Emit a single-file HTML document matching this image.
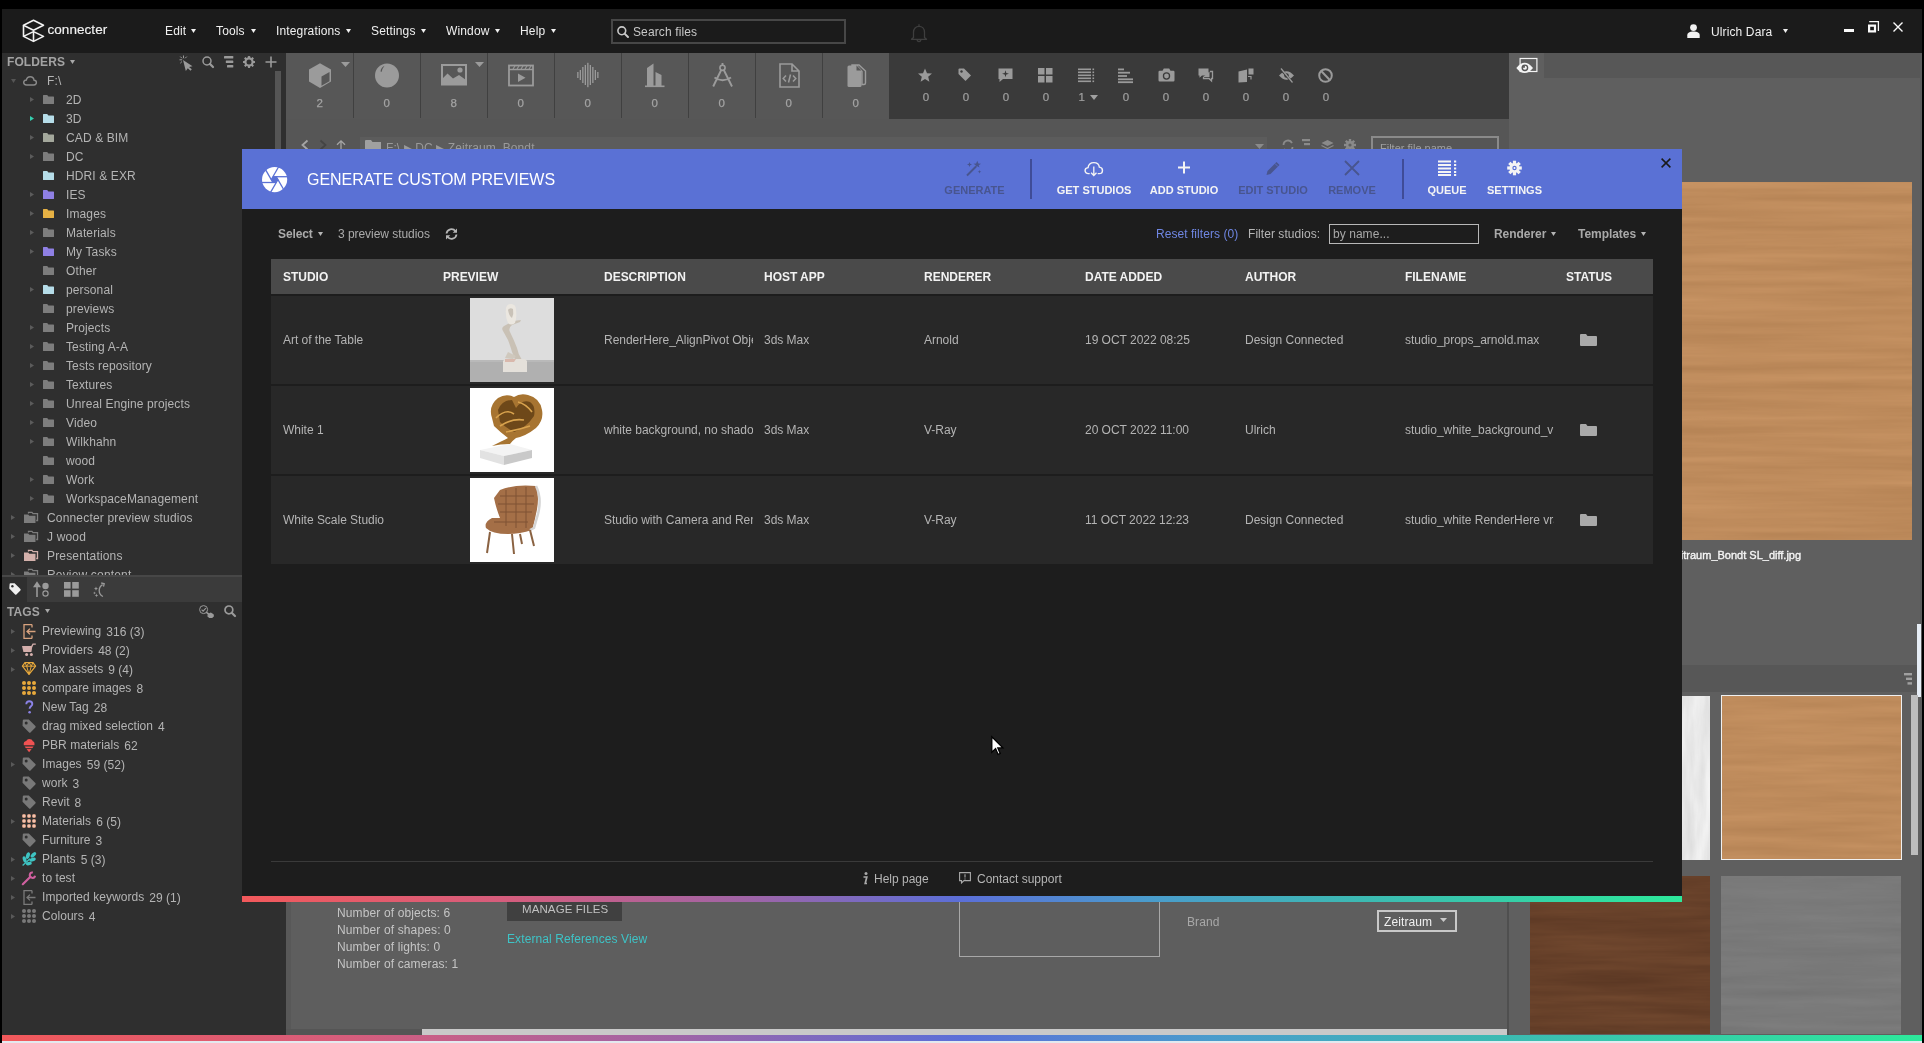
<!DOCTYPE html>
<html><head><meta charset="utf-8">
<style>
*{margin:0;padding:0;box-sizing:border-box}
html,body{width:1924px;height:1043px;overflow:hidden;background:#000;font-family:"Liberation Sans",sans-serif;font-size:12px;color:#bbb}
.a{position:absolute}
.t{position:absolute;white-space:nowrap}
svg{position:absolute;overflow:visible}
</style></head><body>
<div style="position:absolute;left:0;top:0;width:1924px;height:1043px;will-change:transform"><div class="a" style="left:2px;top:9px;width:1920px;height:44px;background:#1b1b1b"></div>
<svg style="left:22px;top:19px;" width="23" height="24" viewBox="0 0 23 24"><g fill="none" stroke="#f2f2f2" stroke-width="1.6" stroke-linejoin="round"><path d="M1.5 6.2L11.5 1.2L21.5 6.2L11.5 11.2L1.5 6.2Z"/><path d="M1.5 6.2V17.4L11.5 22.4L21.5 17.4L11.5 12.6L1.5 17.4"/><path d="M11.5 12.6V22.4"/></g></svg>
<div class="t" style="left:47.5px;top:19.57px;font-size:13.5px;line-height:19.5px;color:#f2f2f2;letter-spacing:0.05px;-webkit-text-stroke:0.15px #f2f2f2">connecter</div>
<div class="t" style="left:165px;top:21.84px;font-size:12px;line-height:18px;color:#f0f0f0;letter-spacing:0.15px">Edit</div>
<svg style="left:191px;top:29px;" width="5" height="4" viewBox="0 0 5 4"><path d="M0 0H5L2.5 4Z" fill="#f0f0f0"/></svg>
<div class="t" style="left:216px;top:21.84px;font-size:12px;line-height:18px;color:#f0f0f0;letter-spacing:0.15px">Tools</div>
<svg style="left:251px;top:29px;" width="5" height="4" viewBox="0 0 5 4"><path d="M0 0H5L2.5 4Z" fill="#f0f0f0"/></svg>
<div class="t" style="left:276px;top:21.84px;font-size:12px;line-height:18px;color:#f0f0f0;letter-spacing:0.15px">Integrations</div>
<svg style="left:346px;top:29px;" width="5" height="4" viewBox="0 0 5 4"><path d="M0 0H5L2.5 4Z" fill="#f0f0f0"/></svg>
<div class="t" style="left:371px;top:21.84px;font-size:12px;line-height:18px;color:#f0f0f0;letter-spacing:0.15px">Settings</div>
<svg style="left:421px;top:29px;" width="5" height="4" viewBox="0 0 5 4"><path d="M0 0H5L2.5 4Z" fill="#f0f0f0"/></svg>
<div class="t" style="left:446px;top:21.84px;font-size:12px;line-height:18px;color:#f0f0f0;letter-spacing:0.15px">Window</div>
<svg style="left:495px;top:29px;" width="5" height="4" viewBox="0 0 5 4"><path d="M0 0H5L2.5 4Z" fill="#f0f0f0"/></svg>
<div class="t" style="left:520px;top:21.84px;font-size:12px;line-height:18px;color:#f0f0f0;letter-spacing:0.15px">Help</div>
<svg style="left:551px;top:29px;" width="5" height="4" viewBox="0 0 5 4"><path d="M0 0H5L2.5 4Z" fill="#f0f0f0"/></svg>
<div class="a" style="left:611px;top:19px;width:235px;height:25px;background:#1b1b1b;border:2px solid #474747"></div>
<svg style="left:617px;top:26px;" width="12" height="12" viewBox="0 0 12 12"><circle cx="4.8" cy="4.8" r="3.9" fill="none" stroke="#c8c8c8" stroke-width="1.6"/><path d="M7.6 7.6L11 11" stroke="#c8c8c8" stroke-width="2" stroke-linecap="round"/></svg>
<div class="t" style="left:633px;top:22.84px;font-size:12px;line-height:18px;color:#c8c8c8;letter-spacing:0.12px">Search files</div>
<svg style="left:910px;top:23px;" width="18" height="19" viewBox="0 0 18 19"><path d="M9 1.2V3M3.5 14.5V9.2C3.5 5.8 5.8 3.3 9 3.3S14.5 5.8 14.5 9.2V14.5L16.5 16.3H1.5L3.5 14.5Z M7.2 16.5C7.2 17.8 8 18.6 9 18.6S10.8 17.8 10.8 16.5" fill="none" stroke="#3e3e3e" stroke-width="1.3" stroke-linejoin="round"/></svg>
<svg style="left:1687px;top:24px;" width="13" height="14" viewBox="0 0 13 14"><circle cx="6.5" cy="3.6" r="3.4" fill="#f2f2f2"/><path d="M0.3 14V11.2C0.3 8.8 2.8 7.6 6.5 7.6S12.7 8.8 12.7 11.2V14Z" fill="#f2f2f2"/></svg>
<div class="t" style="left:1711px;top:22.84px;font-size:12px;line-height:18px;color:#f0f0f0;letter-spacing:0.12px">Ulrich Dara</div>
<svg style="left:1783px;top:29px;" width="5" height="4" viewBox="0 0 5 4"><path d="M0 0H5L2.5 4Z" fill="#f0f0f0"/></svg>
<div class="a" style="left:1844px;top:29px;width:10px;height:3px;background:#fafafa"></div>
<svg style="left:1868px;top:21px;" width="11" height="11" viewBox="0 0 11 11"><path d="M1.2 0.6H10.4V10" fill="none" stroke="#fafafa" stroke-width="1.3"/><path d="M1.1 4.6H7V10.4H1.1Z" fill="none" stroke="#fafafa" stroke-width="2.2"/></svg>
<svg style="left:1893px;top:22px;" width="10" height="10" viewBox="0 0 10 10"><path d="M0.5 0.5L9.5 9.5M9.5 0.5L0.5 9.5" stroke="#fafafa" stroke-width="1.4"/></svg>
<div class="a" style="left:2px;top:53px;width:284px;height:982px;background:#2f2f2f"></div>
<div class="a" style="left:275px;top:71px;width:6px;height:504px;background:#555555"></div>
<div class="t" style="left:7px;top:52.84px;font-size:12px;line-height:18px;color:#a3a3a3;font-weight:bold;letter-spacing:0.1px">FOLDERS</div>
<svg style="left:70px;top:60px;" width="5" height="4" viewBox="0 0 5 4"><path d="M0 0H5L2.5 4Z" fill="#a9a9a9"/></svg>
<svg style="left:178px;top:55px;" width="16" height="16" viewBox="0 0 16 16"><path d="M5 5L14.5 11.2L11 12L13.8 14.3L12.5 15.8L9.8 13.2L7.8 16Z" fill="#9a9a9a"/><path d="M5.5 0.5V3.2M1.5 4.8H4.2M2.3 1.6L4 3.3M8.8 1.6L7.1 3.3M2.3 8.2L4 6.5" stroke="#9a9a9a" stroke-width="1"/></svg>
<svg style="left:202px;top:56px;" width="12" height="12" viewBox="0 0 12 12"><circle cx="5" cy="5" r="4" fill="none" stroke="#9a9a9a" stroke-width="1.5"/><path d="M7.9 7.9L11 11" stroke="#9a9a9a" stroke-width="2.2" stroke-linecap="round"/></svg>
<svg style="left:224px;top:56px;" width="10" height="12" viewBox="0 0 10 12"><rect x="0" y="0" width="9.3" height="2.6" rx="0.6" fill="#9a9a9a"/><rect x="1.8" y="4.5" width="7.5" height="2.6" rx="0.6" fill="#9a9a9a"/><rect x="3" y="9" width="6.3" height="2.6" rx="0.6" fill="#9a9a9a"/></svg>
<svg style="left:243px;top:56px;" width="12" height="12" viewBox="0 0 12 12"><g transform="translate(6 6)"><circle r="3.6" fill="none" stroke="#9a9a9a" stroke-width="2.2"/><rect x="-1.1" y="-6" width="2.2" height="2.4" rx="0.4" transform="rotate(0)" fill="#9a9a9a"/><rect x="-1.1" y="-6" width="2.2" height="2.4" rx="0.4" transform="rotate(45)" fill="#9a9a9a"/><rect x="-1.1" y="-6" width="2.2" height="2.4" rx="0.4" transform="rotate(90)" fill="#9a9a9a"/><rect x="-1.1" y="-6" width="2.2" height="2.4" rx="0.4" transform="rotate(135)" fill="#9a9a9a"/><rect x="-1.1" y="-6" width="2.2" height="2.4" rx="0.4" transform="rotate(180)" fill="#9a9a9a"/><rect x="-1.1" y="-6" width="2.2" height="2.4" rx="0.4" transform="rotate(225)" fill="#9a9a9a"/><rect x="-1.1" y="-6" width="2.2" height="2.4" rx="0.4" transform="rotate(270)" fill="#9a9a9a"/><rect x="-1.1" y="-6" width="2.2" height="2.4" rx="0.4" transform="rotate(315)" fill="#9a9a9a"/></g></svg>
<svg style="left:265px;top:56px;" width="12" height="12" viewBox="0 0 12 12"><path d="M6 0.5V11.5M0.5 6H11.5" stroke="#9a9a9a" stroke-width="1.6"/></svg>
<div class="a" style="left:0;top:0;width:275px;height:575px;overflow:hidden"><svg style="left:11px;top:79px;" width="5" height="4" viewBox="0 0 5 4"><path d="M0 0H5L2.5 4Z" fill="#555"/></svg>
<svg style="left:23px;top:76px;" width="14" height="10" viewBox="0 0 14 10"><path d="M3.6 9H10.8C12.5 9 13.4 7.9 13.4 6.6C13.4 5.3 12.4 4.3 11.1 4.3C10.8 2.3 9.2 0.8 7.2 0.8C5.3 0.8 3.7 2.1 3.4 4C1.8 4.2 0.7 5.3 0.7 6.6C0.7 8 1.9 9 3.6 9Z" fill="none" stroke="#8a8a8a" stroke-width="1.4"/></svg>
<div class="t" style="left:47px;top:71.84px;font-size:12px;line-height:18px;color:#b4b4b4;letter-spacing:0.15px">F:\</div>
<svg style="left:30px;top:96.5px;" width="4" height="5" viewBox="0 0 4 5"><path d="M0 0L4 2.5L0 5Z" fill="#5b5b5b"/></svg>
<svg style="left:43px;top:94.5px;" width="11" height="9" viewBox="0 0 11 9"><path d="M0 0.6Q0 0 0.6 0H4.2L5.4 1.5H10.4Q11 1.5 11 2.1V8.4Q11 9 10.4 9H0.6Q0 9 0 8.4Z" fill="#7d7d7d"/></svg>
<div class="t" style="left:66px;top:90.84px;font-size:12px;line-height:18px;color:#b4b4b4;letter-spacing:0.12px">2D</div>
<svg style="left:30px;top:115.5px;" width="4" height="5" viewBox="0 0 4 5"><path d="M0 0L4 2.5L0 5Z" fill="#35d0b0"/></svg>
<svg style="left:43px;top:113.5px;" width="11" height="9" viewBox="0 0 11 9"><path d="M0 0.6Q0 0 0.6 0H4.2L5.4 1.5H10.4Q11 1.5 11 2.1V8.4Q11 9 10.4 9H0.6Q0 9 0 8.4Z" fill="#b6dde9"/></svg>
<div class="t" style="left:66px;top:109.84px;font-size:12px;line-height:18px;color:#b4b4b4;letter-spacing:0.12px">3D</div>
<svg style="left:30px;top:134.5px;" width="4" height="5" viewBox="0 0 4 5"><path d="M0 0L4 2.5L0 5Z" fill="#5b5b5b"/></svg>
<svg style="left:43px;top:132.5px;" width="11" height="9" viewBox="0 0 11 9"><path d="M0 0.6Q0 0 0.6 0H4.2L5.4 1.5H10.4Q11 1.5 11 2.1V8.4Q11 9 10.4 9H0.6Q0 9 0 8.4Z" fill="#a4a89c"/></svg>
<div class="t" style="left:66px;top:128.84px;font-size:12px;line-height:18px;color:#b4b4b4;letter-spacing:0.12px">CAD &amp; BIM</div>
<svg style="left:30px;top:153.5px;" width="4" height="5" viewBox="0 0 4 5"><path d="M0 0L4 2.5L0 5Z" fill="#5b5b5b"/></svg>
<svg style="left:43px;top:151.5px;" width="11" height="9" viewBox="0 0 11 9"><path d="M0 0.6Q0 0 0.6 0H4.2L5.4 1.5H10.4Q11 1.5 11 2.1V8.4Q11 9 10.4 9H0.6Q0 9 0 8.4Z" fill="#7d7d7d"/></svg>
<div class="t" style="left:66px;top:147.84px;font-size:12px;line-height:18px;color:#b4b4b4;letter-spacing:0.12px">DC</div>
<svg style="left:43px;top:170.5px;" width="11" height="9" viewBox="0 0 11 9"><path d="M0 0.6Q0 0 0.6 0H4.2L5.4 1.5H10.4Q11 1.5 11 2.1V8.4Q11 9 10.4 9H0.6Q0 9 0 8.4Z" fill="#b6dde9"/></svg>
<div class="t" style="left:66px;top:166.84px;font-size:12px;line-height:18px;color:#b4b4b4;letter-spacing:0.12px">HDRI &amp; EXR</div>
<svg style="left:30px;top:191.5px;" width="4" height="5" viewBox="0 0 4 5"><path d="M0 0L4 2.5L0 5Z" fill="#5b5b5b"/></svg>
<svg style="left:43px;top:189.5px;" width="11" height="9" viewBox="0 0 11 9"><path d="M0 0.6Q0 0 0.6 0H4.2L5.4 1.5H10.4Q11 1.5 11 2.1V8.4Q11 9 10.4 9H0.6Q0 9 0 8.4Z" fill="#8f80e4"/></svg>
<div class="t" style="left:66px;top:185.84px;font-size:12px;line-height:18px;color:#b4b4b4;letter-spacing:0.12px">IES</div>
<svg style="left:30px;top:210.5px;" width="4" height="5" viewBox="0 0 4 5"><path d="M0 0L4 2.5L0 5Z" fill="#5b5b5b"/></svg>
<svg style="left:43px;top:208.5px;" width="11" height="9" viewBox="0 0 11 9"><path d="M0 0.6Q0 0 0.6 0H4.2L5.4 1.5H10.4Q11 1.5 11 2.1V8.4Q11 9 10.4 9H0.6Q0 9 0 8.4Z" fill="#e6b144"/></svg>
<div class="t" style="left:66px;top:204.84px;font-size:12px;line-height:18px;color:#b4b4b4;letter-spacing:0.12px">Images</div>
<svg style="left:30px;top:229.5px;" width="4" height="5" viewBox="0 0 4 5"><path d="M0 0L4 2.5L0 5Z" fill="#5b5b5b"/></svg>
<svg style="left:43px;top:227.5px;" width="11" height="9" viewBox="0 0 11 9"><path d="M0 0.6Q0 0 0.6 0H4.2L5.4 1.5H10.4Q11 1.5 11 2.1V8.4Q11 9 10.4 9H0.6Q0 9 0 8.4Z" fill="#7d7d7d"/></svg>
<div class="t" style="left:66px;top:223.84px;font-size:12px;line-height:18px;color:#b4b4b4;letter-spacing:0.12px">Materials</div>
<svg style="left:30px;top:248.5px;" width="4" height="5" viewBox="0 0 4 5"><path d="M0 0L4 2.5L0 5Z" fill="#5b5b5b"/></svg>
<svg style="left:43px;top:246.5px;" width="11" height="9" viewBox="0 0 11 9"><path d="M0 0.6Q0 0 0.6 0H4.2L5.4 1.5H10.4Q11 1.5 11 2.1V8.4Q11 9 10.4 9H0.6Q0 9 0 8.4Z" fill="#8f80e4"/></svg>
<div class="t" style="left:66px;top:242.84px;font-size:12px;line-height:18px;color:#b4b4b4;letter-spacing:0.12px">My Tasks</div>
<svg style="left:43px;top:265.5px;" width="11" height="9" viewBox="0 0 11 9"><path d="M0 0.6Q0 0 0.6 0H4.2L5.4 1.5H10.4Q11 1.5 11 2.1V8.4Q11 9 10.4 9H0.6Q0 9 0 8.4Z" fill="#7d7d7d"/></svg>
<div class="t" style="left:66px;top:261.84px;font-size:12px;line-height:18px;color:#b4b4b4;letter-spacing:0.12px">Other</div>
<svg style="left:30px;top:286.5px;" width="4" height="5" viewBox="0 0 4 5"><path d="M0 0L4 2.5L0 5Z" fill="#5b5b5b"/></svg>
<svg style="left:43px;top:284.5px;" width="11" height="9" viewBox="0 0 11 9"><path d="M0 0.6Q0 0 0.6 0H4.2L5.4 1.5H10.4Q11 1.5 11 2.1V8.4Q11 9 10.4 9H0.6Q0 9 0 8.4Z" fill="#b6dde9"/></svg>
<div class="t" style="left:66px;top:280.84px;font-size:12px;line-height:18px;color:#b4b4b4;letter-spacing:0.12px">personal</div>
<svg style="left:43px;top:303.5px;" width="11" height="9" viewBox="0 0 11 9"><path d="M0 0.6Q0 0 0.6 0H4.2L5.4 1.5H10.4Q11 1.5 11 2.1V8.4Q11 9 10.4 9H0.6Q0 9 0 8.4Z" fill="#7d7d7d"/></svg>
<div class="t" style="left:66px;top:299.84px;font-size:12px;line-height:18px;color:#b4b4b4;letter-spacing:0.12px">previews</div>
<svg style="left:30px;top:324.5px;" width="4" height="5" viewBox="0 0 4 5"><path d="M0 0L4 2.5L0 5Z" fill="#5b5b5b"/></svg>
<svg style="left:43px;top:322.5px;" width="11" height="9" viewBox="0 0 11 9"><path d="M0 0.6Q0 0 0.6 0H4.2L5.4 1.5H10.4Q11 1.5 11 2.1V8.4Q11 9 10.4 9H0.6Q0 9 0 8.4Z" fill="#7d7d7d"/></svg>
<div class="t" style="left:66px;top:318.84px;font-size:12px;line-height:18px;color:#b4b4b4;letter-spacing:0.12px">Projects</div>
<svg style="left:30px;top:343.5px;" width="4" height="5" viewBox="0 0 4 5"><path d="M0 0L4 2.5L0 5Z" fill="#5b5b5b"/></svg>
<svg style="left:43px;top:341.5px;" width="11" height="9" viewBox="0 0 11 9"><path d="M0 0.6Q0 0 0.6 0H4.2L5.4 1.5H10.4Q11 1.5 11 2.1V8.4Q11 9 10.4 9H0.6Q0 9 0 8.4Z" fill="#7d7d7d"/></svg>
<div class="t" style="left:66px;top:337.84px;font-size:12px;line-height:18px;color:#b4b4b4;letter-spacing:0.12px">Testing A-A</div>
<svg style="left:30px;top:362.5px;" width="4" height="5" viewBox="0 0 4 5"><path d="M0 0L4 2.5L0 5Z" fill="#5b5b5b"/></svg>
<svg style="left:43px;top:360.5px;" width="11" height="9" viewBox="0 0 11 9"><path d="M0 0.6Q0 0 0.6 0H4.2L5.4 1.5H10.4Q11 1.5 11 2.1V8.4Q11 9 10.4 9H0.6Q0 9 0 8.4Z" fill="#7d7d7d"/></svg>
<div class="t" style="left:66px;top:356.84px;font-size:12px;line-height:18px;color:#b4b4b4;letter-spacing:0.12px">Tests repository</div>
<svg style="left:30px;top:381.5px;" width="4" height="5" viewBox="0 0 4 5"><path d="M0 0L4 2.5L0 5Z" fill="#5b5b5b"/></svg>
<svg style="left:43px;top:379.5px;" width="11" height="9" viewBox="0 0 11 9"><path d="M0 0.6Q0 0 0.6 0H4.2L5.4 1.5H10.4Q11 1.5 11 2.1V8.4Q11 9 10.4 9H0.6Q0 9 0 8.4Z" fill="#7d7d7d"/></svg>
<div class="t" style="left:66px;top:375.84px;font-size:12px;line-height:18px;color:#b4b4b4;letter-spacing:0.12px">Textures</div>
<svg style="left:30px;top:400.5px;" width="4" height="5" viewBox="0 0 4 5"><path d="M0 0L4 2.5L0 5Z" fill="#5b5b5b"/></svg>
<svg style="left:43px;top:398.5px;" width="11" height="9" viewBox="0 0 11 9"><path d="M0 0.6Q0 0 0.6 0H4.2L5.4 1.5H10.4Q11 1.5 11 2.1V8.4Q11 9 10.4 9H0.6Q0 9 0 8.4Z" fill="#7d7d7d"/></svg>
<div class="t" style="left:66px;top:394.84px;font-size:12px;line-height:18px;color:#b4b4b4;letter-spacing:0.12px">Unreal Engine projects</div>
<svg style="left:30px;top:419.5px;" width="4" height="5" viewBox="0 0 4 5"><path d="M0 0L4 2.5L0 5Z" fill="#5b5b5b"/></svg>
<svg style="left:43px;top:417.5px;" width="11" height="9" viewBox="0 0 11 9"><path d="M0 0.6Q0 0 0.6 0H4.2L5.4 1.5H10.4Q11 1.5 11 2.1V8.4Q11 9 10.4 9H0.6Q0 9 0 8.4Z" fill="#7d7d7d"/></svg>
<div class="t" style="left:66px;top:413.84px;font-size:12px;line-height:18px;color:#b4b4b4;letter-spacing:0.12px">Video</div>
<svg style="left:30px;top:438.5px;" width="4" height="5" viewBox="0 0 4 5"><path d="M0 0L4 2.5L0 5Z" fill="#5b5b5b"/></svg>
<svg style="left:43px;top:436.5px;" width="11" height="9" viewBox="0 0 11 9"><path d="M0 0.6Q0 0 0.6 0H4.2L5.4 1.5H10.4Q11 1.5 11 2.1V8.4Q11 9 10.4 9H0.6Q0 9 0 8.4Z" fill="#7d7d7d"/></svg>
<div class="t" style="left:66px;top:432.84px;font-size:12px;line-height:18px;color:#b4b4b4;letter-spacing:0.12px">Wilkhahn</div>
<svg style="left:43px;top:455.5px;" width="11" height="9" viewBox="0 0 11 9"><path d="M0 0.6Q0 0 0.6 0H4.2L5.4 1.5H10.4Q11 1.5 11 2.1V8.4Q11 9 10.4 9H0.6Q0 9 0 8.4Z" fill="#7d7d7d"/></svg>
<div class="t" style="left:66px;top:451.84px;font-size:12px;line-height:18px;color:#b4b4b4;letter-spacing:0.12px">wood</div>
<svg style="left:30px;top:476.5px;" width="4" height="5" viewBox="0 0 4 5"><path d="M0 0L4 2.5L0 5Z" fill="#5b5b5b"/></svg>
<svg style="left:43px;top:474.5px;" width="11" height="9" viewBox="0 0 11 9"><path d="M0 0.6Q0 0 0.6 0H4.2L5.4 1.5H10.4Q11 1.5 11 2.1V8.4Q11 9 10.4 9H0.6Q0 9 0 8.4Z" fill="#7d7d7d"/></svg>
<div class="t" style="left:66px;top:470.84px;font-size:12px;line-height:18px;color:#b4b4b4;letter-spacing:0.12px">Work</div>
<svg style="left:30px;top:495.5px;" width="4" height="5" viewBox="0 0 4 5"><path d="M0 0L4 2.5L0 5Z" fill="#5b5b5b"/></svg>
<svg style="left:43px;top:493.5px;" width="11" height="9" viewBox="0 0 11 9"><path d="M0 0.6Q0 0 0.6 0H4.2L5.4 1.5H10.4Q11 1.5 11 2.1V8.4Q11 9 10.4 9H0.6Q0 9 0 8.4Z" fill="#7d7d7d"/></svg>
<div class="t" style="left:66px;top:489.84px;font-size:12px;line-height:18px;color:#b4b4b4;letter-spacing:0.12px">WorkspaceManagement</div>
<svg style="left:11px;top:515px;" width="4" height="5" viewBox="0 0 4 5"><path d="M0 0L4 2.5L0 5Z" fill="#5b5b5b"/></svg>
<svg style="left:24px;top:512.2px;" width="14" height="11" viewBox="0 0 14 11"><path d="M4.5 1.6V0.4H8L9 1.6H13.5V8.5H12.2" fill="none" stroke="#7d7d7d" stroke-width="1.3"/><path d="M0 2.6H4.2L5.3 3.8H11.5V11H0Z" fill="#7d7d7d"/></svg>
<div class="t" style="left:47px;top:508.84px;font-size:12px;line-height:18px;color:#b4b4b4;letter-spacing:0.17px">Connecter preview studios</div>
<svg style="left:11px;top:534px;" width="4" height="5" viewBox="0 0 4 5"><path d="M0 0L4 2.5L0 5Z" fill="#5b5b5b"/></svg>
<svg style="left:24px;top:531.2px;" width="14" height="11" viewBox="0 0 14 11"><path d="M4.5 1.6V0.4H8L9 1.6H13.5V8.5H12.2" fill="none" stroke="#7d7d7d" stroke-width="1.3"/><path d="M0 2.6H4.2L5.3 3.8H11.5V11H0Z" fill="#7d7d7d"/></svg>
<div class="t" style="left:47px;top:527.84px;font-size:12px;line-height:18px;color:#b4b4b4;letter-spacing:0.17px">J wood</div>
<svg style="left:11px;top:553px;" width="4" height="5" viewBox="0 0 4 5"><path d="M0 0L4 2.5L0 5Z" fill="#5b5b5b"/></svg>
<svg style="left:24px;top:550.2px;" width="14" height="11" viewBox="0 0 14 11"><path d="M4.5 1.6V0.4H8L9 1.6H13.5V8.5H12.2" fill="none" stroke="#d4b1ab" stroke-width="1.3"/><path d="M0 2.6H4.2L5.3 3.8H11.5V11H0Z" fill="#d4b1ab"/></svg>
<div class="t" style="left:47px;top:546.84px;font-size:12px;line-height:18px;color:#b4b4b4;letter-spacing:0.17px">Presentations</div>
<svg style="left:11px;top:572px;" width="4" height="5" viewBox="0 0 4 5"><path d="M0 0L4 2.5L0 5Z" fill="#5b5b5b"/></svg>
<svg style="left:24px;top:569.2px;" width="14" height="11" viewBox="0 0 14 11"><path d="M4.5 1.6V0.4H8L9 1.6H13.5V8.5H12.2" fill="none" stroke="#7d7d7d" stroke-width="1.3"/><path d="M0 2.6H4.2L5.3 3.8H11.5V11H0Z" fill="#7d7d7d"/></svg>
<div class="t" style="left:47px;top:565.84px;font-size:12px;line-height:18px;color:#b4b4b4;letter-spacing:0.17px">Review content</div>
</div>
<div class="a" style="left:2px;top:575px;width:284px;height:2px;background:#474747"></div>
<div class="a" style="left:2px;top:577px;width:284px;height:25px;background:#3b3b3b"></div>
<div class="a" style="left:2px;top:577px;width:25px;height:25px;background:#2f2f2f"></div>
<svg style="left:9px;top:583px;" width="12" height="12" viewBox="0 0 12 12"><path d="M0.6 1.2Q0.6 0.3 1.5 0.3H5.6L11.4 6.1Q12 6.8 11.4 7.4L7.4 11.4Q6.8 12 6.1 11.4L0.3 5.6Z" fill="#f0f0f0"/><circle cx="3.4" cy="3.3" r="1.2" fill="#2f2f2f"/></svg>
<svg style="left:34px;top:582px;" width="16" height="15" viewBox="0 0 16 15"><path d="M3 15V3.5M0.5 4.5L3 0.8L5.5 4.5Z" stroke="#9a9a9a" stroke-width="1.6" fill="#9a9a9a"/><circle cx="11.5" cy="4" r="3.2" fill="#9a9a9a"/><circle cx="11.5" cy="11.5" r="2.6" fill="none" stroke="#9a9a9a" stroke-width="1.2"/></svg>
<svg style="left:64px;top:582px;" width="15" height="15" viewBox="0 0 15 15"><rect x="0" y="0" width="6.6" height="6.6" fill="#9a9a9a"/><rect x="8.2" y="0" width="6.6" height="6.6" fill="#9a9a9a"/><rect x="0" y="8.2" width="6.6" height="6.6" fill="#9a9a9a"/><rect x="8.2" y="8.2" width="6.6" height="6.6" fill="#9a9a9a"/></svg>
<svg style="left:93px;top:582px;" width="13" height="15" viewBox="0 0 13 15"><path d="M10 14.5C7.5 13.6 6.2 11.3 6.2 8.6C6.2 6 7.4 3.8 9.6 2.6M8.2 1L11.2 1.7L10.5 4.6" fill="none" stroke="#9a9a9a" stroke-width="1.3"/><path d="M3 4.5L3.6 6L5 6.6L3.6 7.2L3 8.7L2.4 7.2L1 6.6L2.4 6Z M1.5 9.5L1.9 10.6L3 11L1.9 11.4L1.5 12.5L1.1 11.4L0 11L1.1 10.6Z M3.5 11.5L4 13L5.3 13.5L4 14L3.5 15.3L3 14L1.7 13.5L3 13Z" fill="#9a9a9a"/></svg>
<div class="t" style="left:7px;top:602.84px;font-size:12px;line-height:18px;color:#a3a3a3;font-weight:bold;letter-spacing:0.1px">TAGS</div>
<svg style="left:45px;top:609px;" width="5" height="4" viewBox="0 0 5 4"><path d="M0 0H5L2.5 4Z" fill="#a9a9a9"/></svg>
<svg style="left:199px;top:605px;" width="16" height="13" viewBox="0 0 16 13"><circle cx="4.6" cy="4.6" r="4" fill="none" stroke="#9a9a9a" stroke-width="1"/><path d="M2.6 4.6L4.1 6.1L6.9 3.1" fill="none" stroke="#9a9a9a" stroke-width="1.1"/><path d="M6.5 7.2L7.3 6.4L10.2 8.2L11.8 7.6L14.6 9.2L15 11.2L13.2 13H10.2L7.8 10.8L9.3 10.2Z" fill="#9a9a9a"/></svg>
<svg style="left:224px;top:605px;" width="12" height="12" viewBox="0 0 12 12"><circle cx="4.9" cy="4.9" r="3.9" fill="none" stroke="#9a9a9a" stroke-width="1.7"/><path d="M7.7 7.7L11 11" stroke="#9a9a9a" stroke-width="2.2" stroke-linecap="round"/></svg>
<svg style="left:11px;top:628.5px;" width="4" height="5" viewBox="0 0 4 5"><path d="M0 0L4 2.5L0 5Z" fill="#595959"/></svg>
<svg style="left:22px;top:624px;" width="14" height="15" viewBox="0 0 14 15"><path d="M10 0.6H2V14.4H10M10 0.6V3.5M10 14.4V11.5" fill="none" stroke="#d8a27e" stroke-width="1.3"/><path d="M13.5 7.5H5M8 4.6L5 7.5L8 10.4" fill="none" stroke="#d8a27e" stroke-width="1.3"/></svg>
<div class="t" style="left:42px;top:621.84px;font-size:12px;line-height:18px;color:#b4b4b4;letter-spacing:0.05px">Previewing<span style="margin-left:5px;position:relative;top:1px">316 (3)</span></div>
<svg style="left:11px;top:647.5px;" width="4" height="5" viewBox="0 0 4 5"><path d="M0 0L4 2.5L0 5Z" fill="#595959"/></svg>
<svg style="left:22px;top:643px;" width="14" height="14" viewBox="0 0 14 14"><path d="M0 2.9H10.4L9.4 9.1H1.4Z" fill="#d3aeab"/><path d="M9.8 3.4L11 1.2H13.8" fill="none" stroke="#d3aeab" stroke-width="1.3"/><circle cx="4.6" cy="11.6" r="1.5" fill="#d3aeab"/><circle cx="9.4" cy="11.6" r="1.5" fill="#d3aeab"/></svg>
<div class="t" style="left:42px;top:640.84px;font-size:12px;line-height:18px;color:#b4b4b4;letter-spacing:0.05px">Providers<span style="margin-left:5px;position:relative;top:1px">48 (2)</span></div>
<svg style="left:11px;top:666.5px;" width="4" height="5" viewBox="0 0 4 5"><path d="M0 0L4 2.5L0 5Z" fill="#595959"/></svg>
<svg style="left:22px;top:662px;" width="14" height="13" viewBox="0 0 14 13"><path d="M3 0.6H11L13.6 4.2L7 12.4L0.4 4.2Z" fill="none" stroke="#e8a93c" stroke-width="1.2" stroke-linejoin="round"/><path d="M0.4 4.2H13.6M4.7 4.2L7 12.4L9.3 4.2M3 0.6L4.7 4.2L7 0.6L9.3 4.2L11 0.6" fill="none" stroke="#e8a93c" stroke-width="1"/></svg>
<div class="t" style="left:42px;top:659.84px;font-size:12px;line-height:18px;color:#b4b4b4;letter-spacing:0.05px">Max assets<span style="margin-left:5px;position:relative;top:1px">9 (4)</span></div>
<svg style="left:22px;top:681px;" width="14" height="14" viewBox="0 0 14 14"><circle cx="2" cy="2" r="2" fill="#e8a93c"/><circle cx="7" cy="2" r="2" fill="#e8a93c"/><circle cx="12" cy="2" r="2" fill="#e8a93c"/><circle cx="2" cy="7" r="2" fill="#e8a93c"/><circle cx="7" cy="7" r="2" fill="#e8a93c"/><circle cx="12" cy="7" r="2" fill="#e8a93c"/><circle cx="2" cy="12" r="2" fill="#e8a93c"/><circle cx="7" cy="12" r="2" fill="#e8a93c"/><circle cx="12" cy="12" r="2" fill="#e8a93c"/></svg>
<div class="t" style="left:42px;top:678.84px;font-size:12px;line-height:18px;color:#b4b4b4;letter-spacing:0.05px">compare images<span style="margin-left:5px;position:relative;top:1px">8</span></div>
<svg style="left:22px;top:700px;" width="14" height="14" viewBox="0 0 14 14"><path d="M4.3 4.2C4.3 2.4 5.5 1.2 7.3 1.2S10.3 2.4 10.3 4C10.3 6.3 7.6 6.3 7.6 8.8" fill="none" stroke="#8b82e6" stroke-width="1.9"/><circle cx="7.6" cy="12.3" r="1.3" fill="#8b82e6"/></svg>
<div class="t" style="left:42px;top:697.84px;font-size:12px;line-height:18px;color:#b4b4b4;letter-spacing:0.05px">New Tag<span style="margin-left:5px;position:relative;top:1px">28</span></div>
<svg style="left:22px;top:719px;" width="14" height="14" viewBox="0 0 14 14"><path d="M0.8 1.6Q0.8 0.5 1.9 0.5H6.8L13.4 7.1Q14 7.8 13.4 8.5L8.5 13.4Q7.8 14 7.1 13.4L0.5 6.8Z" fill="#787878"/><circle cx="4.2" cy="4.1" r="1.5" fill="#2f2f2f"/></svg>
<div class="t" style="left:42px;top:716.84px;font-size:12px;line-height:18px;color:#b4b4b4;letter-spacing:0.05px">drag mixed selection<span style="margin-left:5px;position:relative;top:1px">4</span></div>
<svg style="left:22px;top:738px;" width="14" height="14" viewBox="0 0 14 14"><path d="M1.8 7.2Q1.2 3.6 4.2 3Q5.6 0.6 8 1.2Q10.2 1 10.8 3.2Q13 3.6 12.4 7.2Z" fill="#f05252"/><path d="M2.6 8.4H11.6L7.1 14.2Z" fill="#f05252"/><path d="M3.5 10.6H10.5" stroke="#2f2f2f" stroke-width="0.9"/></svg>
<div class="t" style="left:42px;top:735.84px;font-size:12px;line-height:18px;color:#b4b4b4;letter-spacing:0.05px">PBR materials<span style="margin-left:5px;position:relative;top:1px">62</span></div>
<svg style="left:11px;top:761.5px;" width="4" height="5" viewBox="0 0 4 5"><path d="M0 0L4 2.5L0 5Z" fill="#595959"/></svg>
<svg style="left:22px;top:757px;" width="14" height="14" viewBox="0 0 14 14"><path d="M0.8 1.6Q0.8 0.5 1.9 0.5H6.8L13.4 7.1Q14 7.8 13.4 8.5L8.5 13.4Q7.8 14 7.1 13.4L0.5 6.8Z" fill="#787878"/><circle cx="4.2" cy="4.1" r="1.5" fill="#2f2f2f"/></svg>
<div class="t" style="left:42px;top:754.84px;font-size:12px;line-height:18px;color:#b4b4b4;letter-spacing:0.05px">Images<span style="margin-left:5px;position:relative;top:1px">59 (52)</span></div>
<svg style="left:22px;top:776px;" width="14" height="14" viewBox="0 0 14 14"><path d="M0.8 1.6Q0.8 0.5 1.9 0.5H6.8L13.4 7.1Q14 7.8 13.4 8.5L8.5 13.4Q7.8 14 7.1 13.4L0.5 6.8Z" fill="#787878"/><circle cx="4.2" cy="4.1" r="1.5" fill="#2f2f2f"/></svg>
<div class="t" style="left:42px;top:773.84px;font-size:12px;line-height:18px;color:#b4b4b4;letter-spacing:0.05px">work<span style="margin-left:5px;position:relative;top:1px">3</span></div>
<svg style="left:22px;top:795px;" width="14" height="14" viewBox="0 0 14 14"><path d="M0.8 1.6Q0.8 0.5 1.9 0.5H6.8L13.4 7.1Q14 7.8 13.4 8.5L8.5 13.4Q7.8 14 7.1 13.4L0.5 6.8Z" fill="#787878"/><circle cx="4.2" cy="4.1" r="1.5" fill="#2f2f2f"/></svg>
<div class="t" style="left:42px;top:792.84px;font-size:12px;line-height:18px;color:#b4b4b4;letter-spacing:0.05px">Revit<span style="margin-left:5px;position:relative;top:1px">8</span></div>
<svg style="left:11px;top:818.5px;" width="4" height="5" viewBox="0 0 4 5"><path d="M0 0L4 2.5L0 5Z" fill="#595959"/></svg>
<svg style="left:22px;top:814px;" width="14" height="14" viewBox="0 0 14 14"><circle cx="2" cy="2" r="2" fill="#e5a78c"/><circle cx="2" cy="2" r="0.9" fill="#f5d0c0"/><circle cx="7" cy="2" r="2" fill="#e5a78c"/><circle cx="7" cy="2" r="0.9" fill="#f5d0c0"/><circle cx="12" cy="2" r="2" fill="#e5a78c"/><circle cx="12" cy="2" r="0.9" fill="#f5d0c0"/><circle cx="2" cy="7" r="2" fill="#e5a78c"/><circle cx="2" cy="7" r="0.9" fill="#f5d0c0"/><circle cx="7" cy="7" r="2" fill="#e5a78c"/><circle cx="7" cy="7" r="0.9" fill="#f5d0c0"/><circle cx="12" cy="7" r="2" fill="#e5a78c"/><circle cx="12" cy="7" r="0.9" fill="#f5d0c0"/><circle cx="2" cy="12" r="2" fill="#e5a78c"/><circle cx="2" cy="12" r="0.9" fill="#f5d0c0"/><circle cx="7" cy="12" r="2" fill="#e5a78c"/><circle cx="7" cy="12" r="0.9" fill="#f5d0c0"/><circle cx="12" cy="12" r="2" fill="#e5a78c"/><circle cx="12" cy="12" r="0.9" fill="#f5d0c0"/></svg>
<div class="t" style="left:42px;top:811.84px;font-size:12px;line-height:18px;color:#b4b4b4;letter-spacing:0.05px">Materials<span style="margin-left:5px;position:relative;top:1px">6 (5)</span></div>
<svg style="left:22px;top:833px;" width="14" height="14" viewBox="0 0 14 14"><path d="M0.8 1.6Q0.8 0.5 1.9 0.5H6.8L13.4 7.1Q14 7.8 13.4 8.5L8.5 13.4Q7.8 14 7.1 13.4L0.5 6.8Z" fill="#787878"/><circle cx="4.2" cy="4.1" r="1.5" fill="#2f2f2f"/></svg>
<div class="t" style="left:42px;top:830.84px;font-size:12px;line-height:18px;color:#b4b4b4;letter-spacing:0.05px">Furniture<span style="margin-left:5px;position:relative;top:1px">3</span></div>
<svg style="left:11px;top:856.5px;" width="4" height="5" viewBox="0 0 4 5"><path d="M0 0L4 2.5L0 5Z" fill="#595959"/></svg>
<svg style="left:22px;top:852px;" width="14" height="14" viewBox="0 0 14 14"><g fill="#3ec3c2"><ellipse cx="5.9" cy="3.6" rx="1.9" ry="3.5" transform="rotate(15 5.9 3.6)"/><ellipse cx="11.4" cy="2.8" rx="1.8" ry="3.4" transform="rotate(45 11.4 2.8)"/><ellipse cx="2.6" cy="7.4" rx="1.8" ry="3.3" transform="rotate(-15 2.6 7.4)"/><ellipse cx="10.6" cy="7.6" rx="1.8" ry="3.3" transform="rotate(70 10.6 7.6)"/><ellipse cx="6.8" cy="11.6" rx="1.7" ry="3" transform="rotate(80 6.8 11.6)"/></g><path d="M0.6 13.6L8 6.8" stroke="#3ec3c2" stroke-width="1.3"/></svg>
<div class="t" style="left:42px;top:849.84px;font-size:12px;line-height:18px;color:#b4b4b4;letter-spacing:0.05px">Plants<span style="margin-left:5px;position:relative;top:1px">5 (3)</span></div>
<svg style="left:11px;top:875.5px;" width="4" height="5" viewBox="0 0 4 5"><path d="M0 0L4 2.5L0 5Z" fill="#595959"/></svg>
<svg style="left:22px;top:871px;" width="14" height="14" viewBox="0 0 14 14"><path d="M0.8 13.2L8.4 5.8" stroke="#d060a0" stroke-width="2.2" stroke-linecap="round"/><path d="M10.85 1.5A2.7 2.7 0 1 0 13.1 4.7" fill="none" stroke="#d060a0" stroke-width="2"/></svg>
<div class="t" style="left:42px;top:868.84px;font-size:12px;line-height:18px;color:#b4b4b4;letter-spacing:0.05px">to test</div>
<svg style="left:11px;top:894.5px;" width="4" height="5" viewBox="0 0 4 5"><path d="M0 0L4 2.5L0 5Z" fill="#595959"/></svg>
<svg style="left:22px;top:890px;" width="14" height="15" viewBox="0 0 14 15"><path d="M10 0.6H2V14.4H10M10 0.6V3.5M10 14.4V11.5" fill="none" stroke="#7a7a7a" stroke-width="1.3"/><path d="M13.5 7.5H5M8 4.6L5 7.5L8 10.4" fill="none" stroke="#7a7a7a" stroke-width="1.3"/></svg>
<div class="t" style="left:42px;top:887.84px;font-size:12px;line-height:18px;color:#b4b4b4;letter-spacing:0.05px">Imported keywords<span style="margin-left:5px;position:relative;top:1px">29 (1)</span></div>
<svg style="left:11px;top:913.5px;" width="4" height="5" viewBox="0 0 4 5"><path d="M0 0L4 2.5L0 5Z" fill="#595959"/></svg>
<svg style="left:22px;top:909px;" width="14" height="14" viewBox="0 0 14 14"><circle cx="2" cy="2" r="2" fill="#7a7a7a"/><circle cx="7" cy="2" r="2" fill="#7a7a7a"/><circle cx="12" cy="2" r="2" fill="#7a7a7a"/><circle cx="2" cy="7" r="2" fill="#7a7a7a"/><circle cx="7" cy="7" r="2" fill="#7a7a7a"/><circle cx="12" cy="7" r="2" fill="#7a7a7a"/><circle cx="2" cy="12" r="2" fill="#7a7a7a"/><circle cx="7" cy="12" r="2" fill="#7a7a7a"/><circle cx="12" cy="12" r="2" fill="#7a7a7a"/></svg>
<div class="t" style="left:42px;top:906.84px;font-size:12px;line-height:18px;color:#b4b4b4;letter-spacing:0.05px">Colours<span style="margin-left:5px;position:relative;top:1px">4</span></div>
<div class="a" style="left:286px;top:53px;width:1223px;height:982px;background:#5e5e5e"></div>
<div class="a" style="left:286px;top:53px;width:603px;height:66px;background:#575757"></div>
<div class="a" style="left:889px;top:53px;width:620px;height:66px;background:#3a3a3a"></div>
<div class="a" style="left:286px;top:119px;width:1223px;height:30px;background:#565656"></div>
<div class="a" style="left:353px;top:53px;width:1px;height:65px;background:#404040"></div>
<div class="a" style="left:420px;top:53px;width:1px;height:65px;background:#404040"></div>
<div class="a" style="left:487px;top:53px;width:1px;height:65px;background:#404040"></div>
<div class="a" style="left:554px;top:53px;width:1px;height:65px;background:#404040"></div>
<div class="a" style="left:621px;top:53px;width:1px;height:65px;background:#404040"></div>
<div class="a" style="left:688px;top:53px;width:1px;height:65px;background:#404040"></div>
<div class="a" style="left:755px;top:53px;width:1px;height:65px;background:#404040"></div>
<div class="a" style="left:822px;top:53px;width:1px;height:65px;background:#404040"></div>
<svg style="left:309.0px;top:62.5px;" width="22" height="25" viewBox="0 0 22 25"><path d="M11 0.3L22 6.5V18.5L11 24.9L0 18.5V6.5Z" fill="#9b9b9b"/><path d="M12.5 13.5L20.5 9V18.3L12.5 22.8Z" fill="#575757"/></svg>
<div class="t" style="left:316.4px;top:95.27px;font-size:11.5px;line-height:17.5px;color:#a3a3a3;-webkit-text-stroke:0.25px #a3a3a3">2</div>
<svg style="left:375.0px;top:62.5px;" width="24" height="25" viewBox="0 0 24 25"><circle cx="12" cy="12.5" r="12" fill="#9b9b9b"/><path d="M5.5 8.5Q6 4.5 9.5 2.8Q7.2 5.5 6.8 8.8Z" fill="#575757"/></svg>
<div class="t" style="left:383.4px;top:95.27px;font-size:11.5px;line-height:17.5px;color:#a3a3a3;-webkit-text-stroke:0.25px #a3a3a3">0</div>
<svg style="left:441.0px;top:63.5px;" width="26" height="23" viewBox="0 0 26 23"><rect x="1" y="1" width="24" height="19.5" fill="none" stroke="#9b9b9b" stroke-width="2"/><path d="M1 20.5V15L6.5 9.5L12 14.5L18 11L25 16V20.5Z" fill="#9b9b9b"/><circle cx="19" cy="6" r="2.6" fill="#9b9b9b"/></svg>
<div class="t" style="left:450.4px;top:95.27px;font-size:11.5px;line-height:17.5px;color:#a3a3a3;-webkit-text-stroke:0.25px #a3a3a3">8</div>
<svg style="left:508.0px;top:63.5px;" width="26" height="23" viewBox="0 0 26 23"><rect x="1" y="1.5" width="24" height="20" fill="none" stroke="#9b9b9b" stroke-width="1.8"/><path d="M1 5.5H25" stroke="#9b9b9b" stroke-width="1.5"/><path d="M5 5L7 2M9 5L11 2M13 5L15 2M17 5L19 2M21 5L23 2" stroke="#9b9b9b" stroke-width="1.1"/><path d="M10 9.5V18L17.5 13.7Z" fill="#9b9b9b"/></svg>
<div class="t" style="left:517.4px;top:95.27px;font-size:11.5px;line-height:17.5px;color:#a3a3a3;-webkit-text-stroke:0.25px #a3a3a3">0</div>
<svg style="left:577.0px;top:62.5px;" width="22" height="24" viewBox="0 0 22 24"><rect x="0.20000000000000007" y="9" width="1.3" height="6" fill="#9b9b9b"/><rect x="2.6999999999999997" y="7" width="1.3" height="10" fill="#9b9b9b"/><rect x="5.2" y="4" width="1.3" height="16" fill="#9b9b9b"/><rect x="7.700000000000001" y="2" width="1.3" height="20" fill="#9b9b9b"/><rect x="10.200000000000001" y="-0.1999999999999993" width="1.3" height="24.4" fill="#9b9b9b"/><rect x="12.700000000000001" y="2" width="1.3" height="20" fill="#9b9b9b"/><rect x="15.200000000000001" y="4" width="1.3" height="16" fill="#9b9b9b"/><rect x="17.7" y="7" width="1.3" height="10" fill="#9b9b9b"/><rect x="20.2" y="9" width="1.3" height="6" fill="#9b9b9b"/></svg>
<div class="t" style="left:584.4px;top:95.27px;font-size:11.5px;line-height:17.5px;color:#a3a3a3;-webkit-text-stroke:0.25px #a3a3a3">0</div>
<svg style="left:645.0px;top:62.5px;" width="20" height="25" viewBox="0 0 20 25"><path d="M2 23V5L8.5 0.5V23ZM10.5 23V9L16.5 12V23Z" fill="#9b9b9b"/><rect x="0" y="22.5" width="19.5" height="1.6" fill="#9b9b9b"/></svg>
<div class="t" style="left:651.4px;top:95.27px;font-size:11.5px;line-height:17.5px;color:#a3a3a3;-webkit-text-stroke:0.25px #a3a3a3">0</div>
<svg style="left:711.5px;top:62.5px;" width="21" height="25" viewBox="0 0 21 25"><circle cx="10.5" cy="4.8" r="2.6" fill="none" stroke="#9b9b9b" stroke-width="1.6"/><path d="M10.5 0V2M9.2 7L1.2 23.5M11.8 7L20 23.5M2.5 14.5Q10.5 20 19 14.5" fill="none" stroke="#9b9b9b" stroke-width="1.9"/></svg>
<div class="t" style="left:718.4px;top:95.27px;font-size:11.5px;line-height:17.5px;color:#a3a3a3;-webkit-text-stroke:0.25px #a3a3a3">0</div>
<svg style="left:778.5px;top:62.5px;" width="21" height="25" viewBox="0 0 21 25"><path d="M1 1H13L20 8V24H1Z M13 1V8H20" fill="none" stroke="#9b9b9b" stroke-width="1.6"/><path d="M7 12.5L4.2 15.5L7 18.5M14 12.5L16.8 15.5L14 18.5M11.5 11.5L9.5 19.5" fill="none" stroke="#9b9b9b" stroke-width="1.5"/></svg>
<div class="t" style="left:785.4px;top:95.27px;font-size:11.5px;line-height:17.5px;color:#a3a3a3;-webkit-text-stroke:0.25px #a3a3a3">0</div>
<svg style="left:845.5px;top:62.5px;" width="21" height="25" viewBox="0 0 21 25"><path d="M6 2H13L19.5 8V20Q19.5 21.5 18 21.5H16V8.5L11.5 3.5H6Z" fill="none" stroke="#9b9b9b" stroke-width="1.4"/><path d="M1.5 4Q1.5 2.5 3 2.5H10.5L15.5 7.5V22.5Q15.5 24 14 24H3Q1.5 24 1.5 22.5Z" fill="#9b9b9b"/><path d="M10.5 2.5V7.5H15.5" fill="#575757"/></svg>
<div class="t" style="left:852.4px;top:95.27px;font-size:11.5px;line-height:17.5px;color:#a3a3a3;-webkit-text-stroke:0.25px #a3a3a3">0</div>
<svg style="left:341px;top:62px;" width="9" height="5" viewBox="0 0 9 5"><path d="M0 0H9L4.5 5Z" fill="#9b9b9b"/></svg>
<svg style="left:475px;top:62px;" width="9" height="5" viewBox="0 0 9 5"><path d="M0 0H9L4.5 5Z" fill="#9b9b9b"/></svg>
<svg style="left:918px;top:68px;" width="17" height="16" viewBox="0 0 17 16"><path d="M7 0.5L9 5.2L14 5.5L10.2 8.8L11.4 13.7L7 11L2.6 13.7L3.8 8.8L0 5.5L5 5.2Z" fill="#9a9a9a"/></svg>
<div class="t" style="left:922.7px;top:88.77px;font-size:11.5px;line-height:17.5px;color:#a0a0a0;-webkit-text-stroke:0.2px #a0a0a0">0</div>
<svg style="left:958px;top:68px;" width="17" height="16" viewBox="0 0 17 16"><path d="M0.5 1.5Q0.5 0.5 1.5 0.5H6L13 7.5L7.5 13L0.5 6Z" fill="#9a9a9a"/><circle cx="3.5" cy="3.5" r="1.2" fill="#3a3a3a"/></svg>
<div class="t" style="left:962.7px;top:88.77px;font-size:11.5px;line-height:17.5px;color:#a0a0a0;-webkit-text-stroke:0.2px #a0a0a0">0</div>
<svg style="left:998px;top:68px;" width="17" height="16" viewBox="0 0 17 16"><path d="M0.5 0.5H14.5V11H5L1.5 14V11H0.5Z" fill="#9a9a9a"/><path d="M7.5 2.3L8.3 5L11 5.8L8.3 6.6L7.5 9.3L6.7 6.6L4 5.8L6.7 5Z" fill="#3a3a3a"/></svg>
<div class="t" style="left:1002.7px;top:88.77px;font-size:11.5px;line-height:17.5px;color:#a0a0a0;-webkit-text-stroke:0.2px #a0a0a0">0</div>
<svg style="left:1038px;top:68px;" width="17" height="16" viewBox="0 0 17 16"><rect x="0" y="0" width="6.5" height="6.5" fill="#9a9a9a"/><rect x="8" y="0" width="6.5" height="6.5" fill="#9a9a9a"/><rect x="0" y="8" width="6.5" height="6.5" fill="#9a9a9a"/><rect x="8" y="8" width="6.5" height="6.5" fill="#9a9a9a"/></svg>
<div class="t" style="left:1042.7px;top:88.77px;font-size:11.5px;line-height:17.5px;color:#a0a0a0;-webkit-text-stroke:0.2px #a0a0a0">0</div>
<svg style="left:1078px;top:68px;" width="17" height="16" viewBox="0 0 17 16"><rect x="0" y="0.5" width="13" height="1.6" fill="#9a9a9a"/><rect x="14.5" y="0.5" width="1.6" height="1.6" fill="#9a9a9a"/><rect x="0" y="3.5" width="13" height="1.6" fill="#9a9a9a"/><rect x="14.5" y="3.5" width="1.6" height="1.6" fill="#9a9a9a"/><rect x="0" y="6.5" width="13" height="1.6" fill="#9a9a9a"/><rect x="14.5" y="6.5" width="1.6" height="1.6" fill="#9a9a9a"/><rect x="0" y="9.5" width="13" height="1.6" fill="#9a9a9a"/><rect x="14.5" y="9.5" width="1.6" height="1.6" fill="#9a9a9a"/><rect x="0" y="12.5" width="13" height="1.6" fill="#9a9a9a"/><rect x="14.5" y="12.5" width="1.6" height="1.6" fill="#9a9a9a"/></svg>
<div class="t" style="left:1078.5px;top:88.77px;font-size:11.5px;line-height:17.5px;color:#a0a0a0;-webkit-text-stroke:0.2px #a0a0a0">1</div>
<svg style="left:1089.5px;top:95px;" width="8" height="5" viewBox="0 0 8 5"><path d="M0 0H8L4.0 5Z" fill="#a0a0a0"/></svg>
<svg style="left:1118px;top:68px;" width="17" height="16" viewBox="0 0 17 16"><rect x="0" y="0.5" width="6" height="1.8" fill="#9a9a9a"/><rect x="0" y="3.8" width="12" height="1.8" fill="#9a9a9a"/><rect x="0" y="7.1" width="9" height="1.8" fill="#9a9a9a"/><rect x="0" y="10.4" width="15" height="1.8" fill="#9a9a9a"/><rect x="0" y="13.3" width="15" height="1.8" fill="#9a9a9a"/></svg>
<div class="t" style="left:1122.7px;top:88.77px;font-size:11.5px;line-height:17.5px;color:#a0a0a0;-webkit-text-stroke:0.2px #a0a0a0">0</div>
<svg style="left:1158px;top:68px;" width="17" height="16" viewBox="0 0 17 16"><path d="M0.5 4Q0.5 2.8 1.7 2.8H4.5L5.8 0.5H11.2L12.5 2.8H15.3Q16.5 2.8 16.5 4V12.3Q16.5 13.5 15.3 13.5H1.7Q0.5 13.5 0.5 12.3Z" fill="#9a9a9a"/><circle cx="8.5" cy="8" r="3.7" fill="#3a3a3a"/><circle cx="8.5" cy="8" r="2.4" fill="#9a9a9a"/></svg>
<div class="t" style="left:1162.7px;top:88.77px;font-size:11.5px;line-height:17.5px;color:#a0a0a0;-webkit-text-stroke:0.2px #a0a0a0">0</div>
<svg style="left:1198px;top:68px;" width="17" height="16" viewBox="0 0 17 16"><path d="M0.5 0.5H10.5V7.5H4L1.5 9.8V7.5H0.5Z" fill="#9a9a9a"/><path d="M12 3.5H14.5V10.5H13.5V13L11 10.5H5.5V9" fill="none" stroke="#9a9a9a" stroke-width="1.3"/><path d="M5 9H11.5V3.5" fill="#9a9a9a"/></svg>
<div class="t" style="left:1202.7px;top:88.77px;font-size:11.5px;line-height:17.5px;color:#a0a0a0;-webkit-text-stroke:0.2px #a0a0a0">0</div>
<svg style="left:1238px;top:68px;" width="17" height="16" viewBox="0 0 17 16"><path d="M0.5 3.5L9 1.5V14L0.5 14.5Z" fill="#9a9a9a"/><rect x="10.5" y="0.5" width="5" height="6" fill="#9a9a9a"/><path d="M10 8.5H13V11.5" fill="none" stroke="#9a9a9a" stroke-width="1.2"/></svg>
<div class="t" style="left:1242.7px;top:88.77px;font-size:11.5px;line-height:17.5px;color:#a0a0a0;-webkit-text-stroke:0.2px #a0a0a0">0</div>
<svg style="left:1278px;top:68px;" width="17" height="16" viewBox="0 0 17 16"><path d="M1 7.5Q8.5 -1 16 7.5Q8.5 16 1 7.5Z" fill="#9a9a9a"/><circle cx="8.5" cy="7.5" r="2.3" fill="#3a3a3a"/><path d="M3 1.5L14 14" stroke="#3a3a3a" stroke-width="2.2"/><path d="M3 0.5L14.5 14.5" stroke="#9a9a9a" stroke-width="1.2"/></svg>
<div class="t" style="left:1282.7px;top:88.77px;font-size:11.5px;line-height:17.5px;color:#a0a0a0;-webkit-text-stroke:0.2px #a0a0a0">0</div>
<svg style="left:1318px;top:68px;" width="17" height="16" viewBox="0 0 17 16"><circle cx="7.5" cy="7.5" r="6.3" fill="none" stroke="#9a9a9a" stroke-width="2"/><path d="M3.5 3.2L11.5 11.8" stroke="#9a9a9a" stroke-width="2"/></svg>
<div class="t" style="left:1322.7px;top:88.77px;font-size:11.5px;line-height:17.5px;color:#a0a0a0;-webkit-text-stroke:0.2px #a0a0a0">0</div>
<div class="a" style="left:360px;top:137px;width:907px;height:12px;background:#5c5c5c"></div>
<svg style="left:301px;top:140px;" width="8" height="10" viewBox="0 0 8 10"><path d="M6.5 0.5L1.5 5L6.5 9.5" fill="none" stroke="#a5a5a5" stroke-width="1.8"/></svg>
<svg style="left:319px;top:140px;" width="8" height="10" viewBox="0 0 8 10"><path d="M1.5 0.5L6.5 5L1.5 9.5" fill="none" stroke="#444" stroke-width="1.8"/></svg>
<svg style="left:336px;top:140px;" width="10" height="10" viewBox="0 0 10 10"><path d="M5 0.8V10M1 4.8L5 0.8L9 4.8" fill="none" stroke="#a5a5a5" stroke-width="1.3"/></svg>
<svg style="left:365px;top:140px;" width="17" height="10" viewBox="0 0 17 10"><path d="M0 1Q0 0 1 0H6L7.5 2H16V10H0Z" fill="#a0a0a0"/></svg>
<div class="t" style="left:386px;top:138.84px;font-size:12px;line-height:18px;color:#9a9a9a;letter-spacing:0.1px">F:\ <span style="font-size:11px">&#9654;</span> DC <span style="font-size:11px">&#9654;</span> Zeitraum_Bondt</div>
<svg style="left:1255px;top:144px;" width="9" height="5" viewBox="0 0 9 5"><path d="M0 0H9L4.5 5Z" fill="#8a8a8a"/></svg>
<svg style="left:1282px;top:139px;" width="12" height="10" viewBox="0 0 12 10"><path d="M1.5 6A4.5 4.5 0 0 1 10 4M10.5 8A4.5 4.5 0 0 1 2 10" fill="none" stroke="#8a8a8a" stroke-width="1.8"/></svg>
<svg style="left:1302px;top:139px;" width="9" height="10" viewBox="0 0 9 10"><rect x="0" y="0" width="8" height="2.2" fill="#8a8a8a"/><rect x="2" y="4" width="6" height="2.2" fill="#8a8a8a"/></svg>
<svg style="left:1321px;top:139px;" width="13" height="10" viewBox="0 0 13 10"><path d="M0.5 4L6.5 1L12.5 4L6.5 7Z" fill="#8a8a8a"/><path d="M0.5 6.5L6.5 9.5L12.5 6.5" fill="none" stroke="#8a8a8a" stroke-width="1.2"/></svg>
<svg style="left:1344px;top:139px;" width="12" height="10" viewBox="0 0 12 10"><g transform="translate(6 6)" fill="#8a8a8a"><circle r="4"/><rect x="-1.2" y="-6" width="2.4" height="3" transform="rotate(0)"/><rect x="-1.2" y="-6" width="2.4" height="3" transform="rotate(45)"/><rect x="-1.2" y="-6" width="2.4" height="3" transform="rotate(90)"/><rect x="-1.2" y="-6" width="2.4" height="3" transform="rotate(135)"/><rect x="-1.2" y="-6" width="2.4" height="3" transform="rotate(180)"/><rect x="-1.2" y="-6" width="2.4" height="3" transform="rotate(225)"/><rect x="-1.2" y="-6" width="2.4" height="3" transform="rotate(270)"/><rect x="-1.2" y="-6" width="2.4" height="3" transform="rotate(315)"/><circle r="1.6" fill="#5e5e5e"/></g></svg>
<div class="a" style="left:1371px;top:136px;width:128px;height:13px;background:transparent;border:2px solid #8a8a8a;border-bottom:none"></div>
<div class="t" style="left:1380px;top:139.69px;font-size:11px;line-height:17px;color:#a0a0a0;letter-spacing:0.0px">Filter file name</div>
<div class="a" style="left:286px;top:902px;width:5px;height:127px;background:#585858"></div>
<div class="t" style="left:337px;top:903.84px;font-size:12px;line-height:18px;color:#c5c5c5;letter-spacing:0.13px">Number of objects: 6</div>
<div class="t" style="left:337px;top:920.84px;font-size:12px;line-height:18px;color:#c5c5c5;letter-spacing:0.13px">Number of shapes: 0</div>
<div class="t" style="left:337px;top:937.84px;font-size:12px;line-height:18px;color:#c5c5c5;letter-spacing:0.13px">Number of lights: 0</div>
<div class="t" style="left:337px;top:954.84px;font-size:12px;line-height:18px;color:#c5c5c5;letter-spacing:0.13px">Number of cameras: 1</div>
<div class="a" style="left:507px;top:896px;width:115px;height:25px;background:#404040"></div>
<div class="t" style="left:522px;top:901.27px;font-size:11.5px;line-height:17.5px;color:#c0c0c0;letter-spacing:0.1px">MANAGE FILES</div>
<div class="t" style="left:507px;top:929.84px;font-size:12px;line-height:18px;color:#3ec3c6;letter-spacing:0.1px">External References View</div>
<div class="a" style="left:959px;top:880px;width:201px;height:77px;background:transparent;border:1px solid #a8a8a8"></div>
<div class="t" style="left:1187px;top:912.84px;font-size:12px;line-height:18px;color:#a8a8a8;letter-spacing:0.1px">Brand</div>
<div class="a" style="left:1377px;top:910px;width:80px;height:22px;background:#5e5e5e;border:2px solid #c8c8c8"></div>
<div class="t" style="left:1384px;top:912.84px;font-size:12px;line-height:18px;color:#f0f0f0;letter-spacing:0.1px">Zeitraum</div>
<svg style="left:1440px;top:918px;" width="7" height="4" viewBox="0 0 7 4"><path d="M0 0H7L3.5 4Z" fill="#c8c8c8"/></svg>
<div class="a" style="left:286px;top:1029px;width:1221px;height:6px;background:#555555"></div>
<div class="a" style="left:422px;top:1029px;width:1085px;height:6px;background:#c9c9c9"></div>
<div class="a" style="left:1507px;top:149px;width:2px;height:886px;background:#4f4f4f"></div>
<div class="a" style="left:1509px;top:53px;width:413px;height:982px;background:#5f5f5f"></div>
<div class="a" style="left:1544px;top:53px;width:378px;height:25px;background:#575757"></div>
<svg style="left:1515.5px;top:57px;" width="24" height="18" viewBox="0 0 24 18"><rect x="4.1" y="1.5" width="16.8" height="13" fill="none" stroke="#f4f4f4" stroke-width="1.2"/><path d="M0.3 10.9Q8.6 0.5 17 10.9Q8.6 21.3 0.3 10.9Z" fill="#f4f4f4"/><circle cx="8.9" cy="10.8" r="3.4" fill="#555"/><circle cx="8.9" cy="10.8" r="2" fill="#f4f4f4"/><path d="M8.9 10.8V8.6A2.2 2.2 0 0 0 6.7 10.8Z" fill="#555"/></svg>
<svg style="left:1553px;top:182px;" width="359" height="358" viewBox="0 0 359 358"><filter id="wf1" x="0" y="0" width="100%" height="100%" color-interpolation-filters="sRGB"><feTurbulence type="fractalNoise" baseFrequency="0.004 0.1" numOctaves="4" seed="5"/><feColorMatrix type="matrix" values="0.1 0 0 0 0.695  0.09 0 0 0 0.5  0.08 0 0 0 0.32  0 0 0 0 1"/></filter><rect width="359" height="358" filter="url(#wf1)"/></svg>
<div class="t" style="left:1668px;top:546.69px;font-size:11px;line-height:17px;color:#f6f6f6;letter-spacing:0.0px;-webkit-text-stroke:0.35px #f6f6f6">Zeitraum_Bondt SL_diff.jpg</div>
<div class="a" style="left:1920px;top:53px;width:2px;height:982px;background:#5a5a5a"></div>
<div class="a" style="left:1509px;top:665px;width:411px;height:27px;background:#575757"></div>
<svg style="left:1904px;top:673px;" width="9" height="12" viewBox="0 0 9 12"><rect x="0" y="0" width="8" height="2.4" fill="#a0a0a0"/><rect x="2" y="4.6" width="6" height="2.4" fill="#a0a0a0"/><rect x="3.5" y="9.2" width="4.5" height="2.4" fill="#a0a0a0"/></svg>
<div class="a" style="left:1917px;top:624px;width:4px;height:73px;background:#e6edf5"></div>
<svg style="left:1530px;top:696px;" width="180" height="164" viewBox="0 0 180 164"><filter id="wf2" x="0" y="0" width="100%" height="100%" color-interpolation-filters="sRGB"><feTurbulence type="fractalNoise" baseFrequency="0.08 0.012" numOctaves="4" seed="11"/><feColorMatrix type="matrix" values="0.16 0 0 0 0.8300000000000001  0.16 0 0 0 0.8300000000000001  0.16 0 0 0 0.8300000000000001  0 0 0 0 1"/></filter><rect width="180" height="164" filter="url(#wf2)"/></svg>
<svg style="left:1721px;top:695px;" width="181" height="165" viewBox="0 0 181 165"><filter id="wf3" x="0" y="0" width="100%" height="100%" color-interpolation-filters="sRGB"><feTurbulence type="fractalNoise" baseFrequency="0.006 0.1" numOctaves="4" seed="7"/><feColorMatrix type="matrix" values="0.09 0 0 0 0.7  0.08 0 0 0 0.505  0.07 0 0 0 0.32499999999999996  0 0 0 0 1"/></filter><rect width="181" height="165" filter="url(#wf3)"/><rect x="0.5" y="0.5" width="180" height="164" fill="none" stroke="#f0f0f0" stroke-width="1"/></svg>
<div class="a" style="left:1911px;top:695px;width:7px;height:160px;background:#bdbdbd"></div>
<svg style="left:1530px;top:876px;" width="180" height="158" viewBox="0 0 180 158"><filter id="wf4" x="0" y="0" width="100%" height="100%" color-interpolation-filters="sRGB"><feTurbulence type="fractalNoise" baseFrequency="0.006 0.1" numOctaves="4" seed="13"/><feColorMatrix type="matrix" values="0.12 0 0 0 0.34  0.09 0 0 0 0.20500000000000002  0.06 0 0 0 0.13  0 0 0 0 1"/></filter><rect width="180" height="158" filter="url(#wf4)"/></svg>
<svg style="left:1721px;top:876px;" width="180" height="158" viewBox="0 0 180 158"><filter id="wf5" x="0" y="0" width="100%" height="100%" color-interpolation-filters="sRGB"><feTurbulence type="fractalNoise" baseFrequency="0.006 0.1" numOctaves="4" seed="17"/><feColorMatrix type="matrix" values="0.06 0 0 0 0.44499999999999995  0.06 0 0 0 0.44499999999999995  0.06 0 0 0 0.44499999999999995  0 0 0 0 1"/></filter><rect width="180" height="158" filter="url(#wf5)"/></svg>
<div class="a" style="left:242px;top:149px;width:1440px;height:747px;background:#1d1d1d"></div>
<div class="a" style="left:242px;top:149px;width:1440px;height:60px;background:#5a71d5"></div>
<svg style="left:262px;top:166.5px;" width="25" height="25" viewBox="0 0 25 25"><g transform="translate(12.6 12.6)"><circle r="12.6" fill="#ffffff"/><path d="M-1.80 -2.90L14.00 -2.90" stroke="#5a71d5" stroke-width="1.3"/><path d="M1.61 -3.01L9.51 10.67" stroke="#5a71d5" stroke-width="1.3"/><path d="M3.41 -0.11L-4.49 13.57" stroke="#5a71d5" stroke-width="1.3"/><path d="M1.80 2.90L-14.00 2.90" stroke="#5a71d5" stroke-width="1.3"/><path d="M-1.61 3.01L-9.51 -10.67" stroke="#5a71d5" stroke-width="1.3"/><path d="M-3.41 0.11L4.49 -13.57" stroke="#5a71d5" stroke-width="1.3"/><circle r="3" fill="#5a71d5"/></g></svg>
<div class="t" style="left:307px;top:169.46px;font-size:16px;line-height:22px;color:#ffffff;letter-spacing:-0.05px">GENERATE CUSTOM PREVIEWS</div>
<svg style="left:966px;top:160px;" width="16" height="16" viewBox="0 0 16 16"><path d="M1 15.5L10 6.5" stroke="#48558f" stroke-width="2"/><path d="M11 1L12.5 4.5L16 5L13 7L14 10L11 8.3L8 10L9 7L6 5L9.5 4.5Z" transform="scale(0.75) translate(4 0)" fill="#48558f"/><path d="M3.5 2L4.2 3.8L6 4.5L4.2 5.2L3.5 7L2.8 5.2L1 4.5L2.8 3.8Z M13.5 10L14 11.3L15.3 11.8L14 12.3L13.5 13.6L13 12.3L11.7 11.8L13 11.3Z" fill="#48558f"/></svg>
<div class="t" style="left:0px;top:181.69px;font-size:11px;line-height:17px;color:#48558f;font-weight:bold;width:200px;left:874.5px;text-align:center">GENERATE</div>
<div class="a" style="left:1030px;top:159px;width:2px;height:40px;background:#3f4c97"></div>
<svg style="left:1084px;top:160px;" width="20" height="16" viewBox="0 0 20 16"><g transform="translate(0.2 0.6) scale(1.1 1)"><path d="M5 13H3.8C2 13 0.8 11.7 0.8 10C0.8 8.4 2 7.3 3.5 7.1C3.8 4.3 5.8 2 8.8 2C11.5 2 13.5 4 13.8 6.6C15.4 6.8 16.6 8.1 16.6 9.8C16.6 11.6 15.3 13 13.5 13H12.3" fill="none" stroke="#f4f4f4" stroke-width="1.3"/></g><path d="M9.8 6.5V15.5M7.1 12.8L9.8 15.5L12.5 12.8" fill="none" stroke="#f4f4f4" stroke-width="1.3"/></svg>
<div class="t" style="left:0px;top:181.69px;font-size:11px;line-height:17px;color:#f4f4f4;font-weight:bold;width:200px;left:994px;text-align:center">GET STUDIOS</div>
<svg style="left:1176px;top:160px;" width="16" height="16" viewBox="0 0 16 16"><path d="M8 1.5V13.5M2 7.5H14" stroke="#f4f4f4" stroke-width="2"/></svg>
<div class="t" style="left:0px;top:181.69px;font-size:11px;line-height:17px;color:#f4f4f4;font-weight:bold;width:200px;left:1084px;text-align:center">ADD STUDIO</div>
<svg style="left:1265px;top:160px;" width="16" height="16" viewBox="0 0 16 16"><path d="M1.5 15L2.5 11L11.5 2L14.5 5L5.5 14Z" fill="#48558f"/><path d="M10 3.5L13 6.5" stroke="#5a71d5" stroke-width="0.8"/></svg>
<div class="t" style="left:0px;top:181.69px;font-size:11px;line-height:17px;color:#48558f;font-weight:bold;width:200px;left:1173px;text-align:center">EDIT STUDIO</div>
<svg style="left:1344px;top:160px;" width="16" height="16" viewBox="0 0 16 16"><path d="M1 1L15 15M15 1L1 15" stroke="#48558f" stroke-width="1.8"/></svg>
<div class="t" style="left:0px;top:181.69px;font-size:11px;line-height:17px;color:#48558f;font-weight:bold;width:200px;left:1252px;text-align:center">REMOVE</div>
<div class="a" style="left:1402px;top:159px;width:2px;height:40px;background:#3f4c97"></div>
<svg style="left:1438px;top:160px;" width="19" height="16" viewBox="0 0 19 16"><rect x="0" y="0.5" width="13" height="2" fill="#f4f4f4"/><rect x="16" y="0.5" width="2.2" height="2" fill="#f4f4f4"/><rect x="0" y="4" width="13" height="2" fill="#f4f4f4"/><rect x="16" y="4" width="2.2" height="2" fill="#f4f4f4"/><rect x="0" y="7.5" width="13" height="2" fill="#f4f4f4"/><rect x="16" y="7.5" width="2.2" height="2" fill="#f4f4f4"/><rect x="0" y="11" width="13" height="2" fill="#f4f4f4"/><rect x="16" y="11" width="2.2" height="2" fill="#f4f4f4"/><rect x="0" y="14" width="13" height="2" fill="#f4f4f4"/><rect x="16" y="14" width="2.2" height="2" fill="#f4f4f4"/></svg>
<div class="t" style="left:0px;top:181.69px;font-size:11px;line-height:17px;color:#f4f4f4;font-weight:bold;width:200px;left:1347px;text-align:center">QUEUE</div>
<svg style="left:1507px;top:160px;" width="15" height="16" viewBox="0 0 15 16"><g transform="translate(7.5 8)" fill="#f4f4f4"><circle r="5"/><rect x="-1.6" y="-7.3" width="3.2" height="3.6" transform="rotate(0)"/><rect x="-1.6" y="-7.3" width="3.2" height="3.6" transform="rotate(45)"/><rect x="-1.6" y="-7.3" width="3.2" height="3.6" transform="rotate(90)"/><rect x="-1.6" y="-7.3" width="3.2" height="3.6" transform="rotate(135)"/><rect x="-1.6" y="-7.3" width="3.2" height="3.6" transform="rotate(180)"/><rect x="-1.6" y="-7.3" width="3.2" height="3.6" transform="rotate(225)"/><rect x="-1.6" y="-7.3" width="3.2" height="3.6" transform="rotate(270)"/><rect x="-1.6" y="-7.3" width="3.2" height="3.6" transform="rotate(315)"/><circle r="2.2" fill="#5a71d5"/><circle r="1" fill="#ffffff"/></g></svg>
<div class="t" style="left:0px;top:181.69px;font-size:11px;line-height:17px;color:#f4f4f4;font-weight:bold;width:200px;left:1414.5px;text-align:center">SETTINGS</div>
<svg style="left:1661px;top:158px;" width="10" height="10" viewBox="0 0 10 10"><path d="M0.6 0.6L9.4 9.4M9.4 0.6L0.6 9.4" stroke="#1a1a1a" stroke-width="1.5"/></svg>
<div class="t" style="left:278px;top:224.84px;font-size:12px;line-height:18px;color:#ababab;font-weight:bold;letter-spacing:-0.1px">Select</div>
<svg style="left:318px;top:232px;" width="5" height="4" viewBox="0 0 5 4"><path d="M0 0H5L2.5 4Z" fill="#b5b5b5"/></svg>
<div class="t" style="left:338px;top:224.84px;font-size:12px;line-height:18px;color:#ababab;letter-spacing:-0.05px">3 preview studios</div>
<svg style="left:445px;top:228px;" width="13" height="12" viewBox="0 0 13 12"><path d="M1.5 5.5A5 5 0 0 1 10.5 3.2M11.5 6.5A5 5 0 0 1 2.5 8.8" fill="none" stroke="#b5b5b5" stroke-width="1.8"/><path d="M12 0.5V4.8H7.7Z M1 11.5V7.2H5.3Z" fill="#b5b5b5"/></svg>
<div class="t" style="left:1156px;top:224.84px;font-size:12px;line-height:18px;color:#6f86e2;letter-spacing:0.05px">Reset filters (0)</div>
<div class="t" style="left:1248px;top:224.84px;font-size:12px;line-height:18px;color:#b5b5b5;letter-spacing:0.05px">Filter studios:</div>
<div class="a" style="left:1329px;top:224px;width:150px;height:20px;background:#1d1d1d;border:1px solid #b8b8b8"></div>
<div class="t" style="left:1333px;top:224.84px;font-size:12px;line-height:18px;color:#a8a8a8;letter-spacing:0.05px">by name...</div>
<div class="t" style="left:1494px;top:224.84px;font-size:12px;line-height:18px;color:#a9a9a9;font-weight:bold;letter-spacing:-0.05px">Renderer</div>
<svg style="left:1551px;top:232px;" width="5" height="4" viewBox="0 0 5 4"><path d="M0 0H5L2.5 4Z" fill="#b5b5b5"/></svg>
<div class="t" style="left:1578px;top:224.84px;font-size:12px;line-height:18px;color:#a9a9a9;font-weight:bold;letter-spacing:-0.05px">Templates</div>
<svg style="left:1641px;top:232px;" width="5" height="4" viewBox="0 0 5 4"><path d="M0 0H5L2.5 4Z" fill="#b5b5b5"/></svg>
<div class="a" style="left:271px;top:259px;width:1382px;height:35px;background:#4a4a4a"></div>
<div class="t" style="left:283px;top:267.84px;font-size:12px;line-height:18px;color:#f2f2f2;font-weight:bold;letter-spacing:-0.02px">STUDIO</div>
<div class="t" style="left:443px;top:267.84px;font-size:12px;line-height:18px;color:#f2f2f2;font-weight:bold;letter-spacing:-0.02px">PREVIEW</div>
<div class="t" style="left:604px;top:267.84px;font-size:12px;line-height:18px;color:#f2f2f2;font-weight:bold;letter-spacing:-0.02px">DESCRIPTION</div>
<div class="t" style="left:764px;top:267.84px;font-size:12px;line-height:18px;color:#f2f2f2;font-weight:bold;letter-spacing:-0.02px">HOST APP</div>
<div class="t" style="left:924px;top:267.84px;font-size:12px;line-height:18px;color:#f2f2f2;font-weight:bold;letter-spacing:-0.02px">RENDERER</div>
<div class="t" style="left:1085px;top:267.84px;font-size:12px;line-height:18px;color:#f2f2f2;font-weight:bold;letter-spacing:-0.02px">DATE ADDED</div>
<div class="t" style="left:1245px;top:267.84px;font-size:12px;line-height:18px;color:#f2f2f2;font-weight:bold;letter-spacing:-0.02px">AUTHOR</div>
<div class="t" style="left:1405px;top:267.84px;font-size:12px;line-height:18px;color:#f2f2f2;font-weight:bold;letter-spacing:-0.02px">FILENAME</div>
<div class="t" style="left:1566px;top:267.84px;font-size:12px;line-height:18px;color:#f2f2f2;font-weight:bold;letter-spacing:-0.02px">STATUS</div>
<div class="a" style="left:271px;top:296px;width:1382px;height:88px;background:#282828"></div>
<div class="t" style="left:283px;top:331.34px;font-size:12px;line-height:18px;color:#b4b4b4;letter-spacing:-0.02px">Art of the Table</div>
<svg style="left:470px;top:298px;" width="84" height="84" viewBox="0 0 84 84"><rect width="84" height="62" fill="#dddddd"/><rect y="62" width="84" height="22" fill="#b0b0b0"/><path d="M0 62H84V64H0Z" fill="#b9b9b9"/><path d="M34 28Q31 30 33 33L38 42Q41 50 42 54Q44 58 45 62H52Q48 56 47 50Q44 42 40 34Q38 30 42 27L50 24L51 22L43 23Z" fill="#c9c1b5"/><path d="M36 10Q37 6 41 6Q46 6 46 12Q47 20 45 25Q41 28 38 25Q35 18 36 10Z" fill="#ebe7e0"/><path d="M38 12Q40 9 43 11Q44 16 42 20Q39 18 38 12Z" fill="#c9c2b8"/><path d="M33 63L35 61H55L57 63V74H33Z" fill="#e4e0da"/><path d="M35 61H46L44 64H35Z" fill="#d9b8ac"/><path d="M35 60L38 54L46 58L43 61Z" fill="#cfc8bd"/></svg>
<div class="t" style="left:604px;top:331.34px;font-size:12px;line-height:18px;color:#b4b4b4;letter-spacing:-0.02px;width:149px;overflow:hidden">RenderHere_AlignPivot Object</div>
<div class="t" style="left:764px;top:331.34px;font-size:12px;line-height:18px;color:#b4b4b4;letter-spacing:-0.02px">3ds Max</div>
<div class="t" style="left:924px;top:331.34px;font-size:12px;line-height:18px;color:#b4b4b4;letter-spacing:-0.02px">Arnold</div>
<div class="t" style="left:1085px;top:331.34px;font-size:12px;line-height:18px;color:#b4b4b4;letter-spacing:-0.02px">19 OCT 2022 08:25</div>
<div class="t" style="left:1245px;top:331.34px;font-size:12px;line-height:18px;color:#b4b4b4;letter-spacing:-0.02px">Design Connected</div>
<div class="t" style="left:1405px;top:331.34px;font-size:12px;line-height:18px;color:#b4b4b4;letter-spacing:-0.02px;width:149px;overflow:hidden">studio_props_arnold.max</div>
<svg style="left:1580px;top:334px;" width="17" height="12" viewBox="0 0 17 12"><path d="M0 1Q0 0 1 0H6L7.5 2H16Q17 2 17 3V11Q17 12 16 12H1Q0 12 0 11Z" fill="#a9a9a9"/></svg>
<div class="a" style="left:271px;top:386px;width:1382px;height:88px;background:#282828"></div>
<div class="t" style="left:283px;top:421.34px;font-size:12px;line-height:18px;color:#b4b4b4;letter-spacing:-0.02px">White 1</div>
<svg style="left:470px;top:388px;" width="84" height="84" viewBox="0 0 84 84"><rect width="84" height="84" fill="#ffffff"/><path d="M22 30Q18 18 28 10Q36 5 44 9Q50 5 58 7Q70 10 72 22Q74 32 66 40Q56 48 46 50Q42 53 40 56Q30 56 22 58Q32 53 38 50Q30 44 24 38Z" fill="#a77431"/><path d="M28 22Q32 12 42 12L46 20Q52 11 60 14Q66 18 64 28Q56 40 44 44Q36 40 30 34Z" fill="#6e4819"/><path d="M26 30Q36 20 44 26M30 38Q42 30 54 32M48 14Q56 16 62 24M36 44Q48 42 60 38" stroke="#d9a34e" stroke-width="1.6" fill="none"/><path d="M10 62L40 56L62 62L34 68Z" fill="#f3f3f3"/><path d="M10 62V70L34 77V68Z" fill="#e2e2e2"/><path d="M34 68V77L62 70V62Z" fill="#c9c9c9"/></svg>
<div class="t" style="left:604px;top:421.34px;font-size:12px;line-height:18px;color:#b4b4b4;letter-spacing:-0.02px;width:149px;overflow:hidden">white background, no shadow</div>
<div class="t" style="left:764px;top:421.34px;font-size:12px;line-height:18px;color:#b4b4b4;letter-spacing:-0.02px">3ds Max</div>
<div class="t" style="left:924px;top:421.34px;font-size:12px;line-height:18px;color:#b4b4b4;letter-spacing:-0.02px">V-Ray</div>
<div class="t" style="left:1085px;top:421.34px;font-size:12px;line-height:18px;color:#b4b4b4;letter-spacing:-0.02px">20 OCT 2022 11:00</div>
<div class="t" style="left:1245px;top:421.34px;font-size:12px;line-height:18px;color:#b4b4b4;letter-spacing:-0.02px">Ulrich</div>
<div class="t" style="left:1405px;top:421.34px;font-size:12px;line-height:18px;color:#b4b4b4;letter-spacing:-0.02px;width:149px;overflow:hidden">studio_white_background_vray.max</div>
<svg style="left:1580px;top:424px;" width="17" height="12" viewBox="0 0 17 12"><path d="M0 1Q0 0 1 0H6L7.5 2H16Q17 2 17 3V11Q17 12 16 12H1Q0 12 0 11Z" fill="#a9a9a9"/></svg>
<div class="a" style="left:271px;top:476px;width:1382px;height:88px;background:#282828"></div>
<div class="t" style="left:283px;top:511.34px;font-size:12px;line-height:18px;color:#b4b4b4;letter-spacing:-0.02px">White Scale Studio</div>
<svg style="left:470px;top:478px;" width="84" height="84" viewBox="0 0 84 84"><rect width="84" height="84" fill="#ffffff"/><path d="M30 12Q44 6 66 8Q70 20 66 36Q64 46 62 52Q50 56 38 56Q22 56 16 50Q14 44 22 40L30 40Q26 30 24 20Z" fill="#a46f47"/><path d="M30 18H64M28 26H64M30 34H62M24 44H58M36 12V48M46 10V50M56 9V50" stroke="#7f5234" stroke-width="1" fill="none"/><path d="M66 8Q72 20 68 36L64 50L60 52" stroke="#d5d5d5" stroke-width="2.5" fill="none"/><path d="M20 54L17 75M42 56L44 76M60 52L64 68M50 56L52 66" stroke="#8a6242" stroke-width="2" fill="none"/></svg>
<div class="t" style="left:604px;top:511.34px;font-size:12px;line-height:18px;color:#b4b4b4;letter-spacing:-0.02px;width:149px;overflow:hidden">Studio with Camera and RenderHere</div>
<div class="t" style="left:764px;top:511.34px;font-size:12px;line-height:18px;color:#b4b4b4;letter-spacing:-0.02px">3ds Max</div>
<div class="t" style="left:924px;top:511.34px;font-size:12px;line-height:18px;color:#b4b4b4;letter-spacing:-0.02px">V-Ray</div>
<div class="t" style="left:1085px;top:511.34px;font-size:12px;line-height:18px;color:#b4b4b4;letter-spacing:-0.02px">11 OCT 2022 12:23</div>
<div class="t" style="left:1245px;top:511.34px;font-size:12px;line-height:18px;color:#b4b4b4;letter-spacing:-0.02px">Design Connected</div>
<div class="t" style="left:1405px;top:511.34px;font-size:12px;line-height:18px;color:#b4b4b4;letter-spacing:-0.02px;width:149px;overflow:hidden">studio_white RenderHere vray.max</div>
<svg style="left:1580px;top:514px;" width="17" height="12" viewBox="0 0 17 12"><path d="M0 1Q0 0 1 0H6L7.5 2H16Q17 2 17 3V11Q17 12 16 12H1Q0 12 0 11Z" fill="#a9a9a9"/></svg>
<div class="a" style="left:271px;top:861px;width:1382px;height:1px;background:#3a3a3a"></div>
<svg style="left:862px;top:872px;" width="6" height="12" viewBox="0 0 6 12"><circle cx="4" cy="1.6" r="1.5" fill="#a9a9a9"/><path d="M1.5 5H4.8L3.2 11.5H5" fill="none" stroke="#a9a9a9" stroke-width="1.7"/></svg>
<div class="t" style="left:874px;top:869.84px;font-size:12px;line-height:18px;color:#b5b5b5;letter-spacing:0.0px">Help page</div>
<svg style="left:959px;top:872px;" width="12" height="12" viewBox="0 0 12 12"><path d="M0.6 0.6H11.4V8.6H5L2.5 11V8.6H0.6Z" fill="none" stroke="#a9a9a9" stroke-width="1.1"/><path d="M6 2.2V5.5M6 6.5V7.6" stroke="#a9a9a9" stroke-width="1.1"/></svg>
<div class="t" style="left:977px;top:869.84px;font-size:12px;line-height:18px;color:#b5b5b5;letter-spacing:0.0px">Contact support</div>
<div class="a" style="left:242px;top:896px;width:1440px;height:6px;background:linear-gradient(90deg,#f2595b 0%,#d65d7c 18%,#a064a6 35%,#5b6fd8 50%,#4a9ccc 63%,#3cbab2 78%,#2de89b 100%)"></div>
<div class="a" style="left:2px;top:1035px;width:1920px;height:6px;background:linear-gradient(90deg,#f2595b 0%,#d65d7c 18%,#a064a6 35%,#5b6fd8 50%,#4a9ccc 63%,#3cbab2 78%,#2de89b 100%)"></div>
<div class="a" style="left:2px;top:1041px;width:1920px;height:2px;background:#e3e9ef"></div>
<svg style="left:991px;top:736px;" width="13" height="20" viewBox="0 0 13 20"><path d="M0.8 0.8V16.2L4.6 12.6L7.1 18.4L9.2 17.5L6.8 11.9H11.8Z" fill="#ffffff" stroke="#000" stroke-width="1.3" stroke-linejoin="miter"/></svg>
</div></body></html>
